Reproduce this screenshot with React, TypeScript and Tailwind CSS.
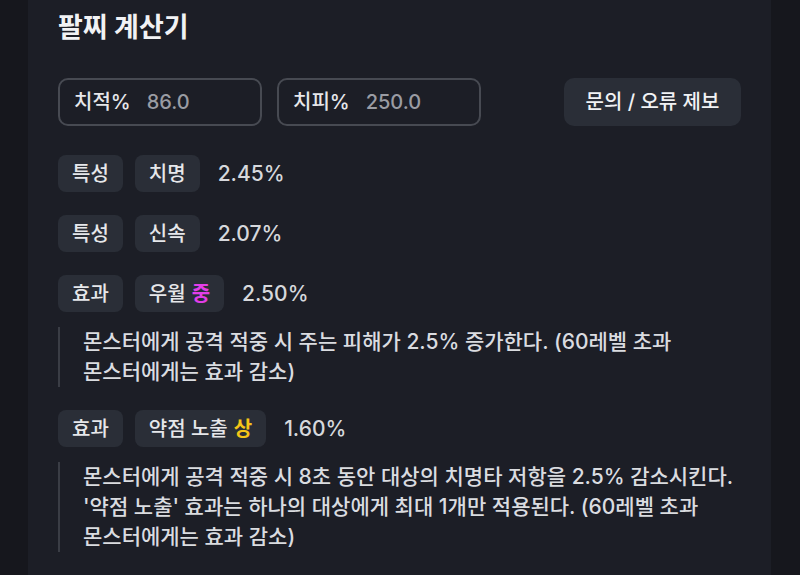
import React from 'react';

type Row = {
  kind: string;
  name: string;
  grade?: { text: string; color: string };
  value: string;
  desc?: string[];
};

const rows: Row[] = [
  { kind: '특성', name: '치명', value: '2.45%' },
  { kind: '특성', name: '신속', value: '2.07%' },
  {
    kind: '효과',
    name: '우월',
    grade: { text: '중', color: 'text-[#e23ee8]' },
    value: '2.50%',
    desc: ['몬스터에게 공격 적중 시 주는 피해가 2.5% 증가한다. (60레벨 초과 몬스터에게는 효과 감소)'],
  },
  {
    kind: '효과',
    name: '약점 노출',
    grade: { text: '상', color: 'text-[#f5c518]' },
    value: '1.60%',
    desc: [
      '몬스터에게 공격 적중 시 8초 동안 대상의 치명타 저항을 2.5% 감소시킨다.',
      "'약점 노출' 효과는 하나의 대상에게 최대 1개만 적용된다. (60레벨 초과 몬스터에게는 효과 감소)",
    ],
  },
];

const Tag: React.FC<{ children: React.ReactNode }> = ({ children }) => (
  <span className="h-[37px] px-[14px] flex items-center rounded-lg bg-[#2a2e37] text-[20px] font-medium text-[#e6e7ea]">
    {children}
  </span>
);

const Field: React.FC<{ label: string; value: string }> = ({ label, value }) => (
  <div className="w-[204px] h-[48px] rounded-[10px] border-2 border-[#474a52] px-[14px] flex items-center gap-4 text-[20px] font-medium">
    <span className="text-[#e6e7ea]">{label}</span>
    <span className="text-[#9a9ca3]">{value}</span>
  </div>
);

export default function App() {
  return (
    <div
      className="w-[800px] h-[575px] overflow-hidden bg-[#16171d]"
      style={{ fontFamily: 'Inter, "Noto Sans CJK KR", sans-serif' }}
    >
      <div className="ml-7 w-[743px] h-full bg-[#1c1e26] px-[30px] pt-[10px]">
        <h1 className="text-[27px] leading-9 font-bold text-[#f1f2f4]">팔찌 계산기</h1>

        <div className="mt-[32px] flex items-center">
          <div className="flex gap-[15px]">
            <Field label="치적%" value="86.0" />
            <Field label="치피%" value="250.0" />
          </div>
          <button className="ml-auto w-[177px] h-[48px] rounded-[10px] bg-[#2a2e37] text-[20px] font-medium text-[#f1f2f4]">
            문의 / 오류 제보
          </button>
        </div>

        <div className="mt-[29px] flex flex-col">
          {rows.map((r, i) => (
            <div key={i} className={i === 0 ? '' : 'mt-[23px]'}>
              <div className="flex items-center">
                <Tag>{r.kind}</Tag>
                <div className="ml-3">
                  <Tag>
                    {r.name}
                    {r.grade && <span className={`ml-[6px] font-bold ${r.grade.color}`}>{r.grade.text}</span>}
                  </Tag>
                </div>
                <span className="ml-[18px] text-[21px] font-medium text-[#d6d8dc]">{r.value}</span>
              </div>
              {r.desc && (
                <div className="mt-[15px] border-l-2 border-[#3a3d45] pl-[23px] text-[21px] font-medium leading-[30px] text-[#dadce0] break-keep">
                  {r.desc.map((d, j) => (
                    <p key={j}>{d}</p>
                  ))}
                </div>
              )}
            </div>
          ))}
        </div>
      </div>
    </div>
  );
}
